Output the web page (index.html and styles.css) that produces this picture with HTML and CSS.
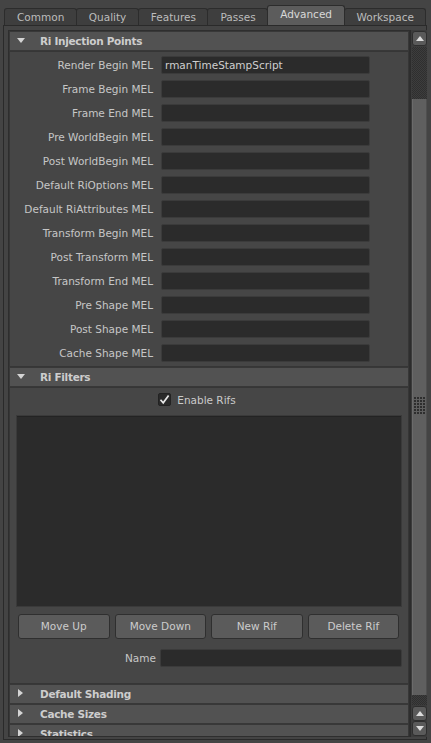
FILE: index.html
```html
<!DOCTYPE html>
<html>
<head>
<meta charset="utf-8">
<link rel="stylesheet" href="styles.css">
</head>
<body>
<div class="tabs">
  <div class="tab">Common</div>
  <div class="tab">Quality</div>
  <div class="tab">Features</div>
  <div class="tab">Passes</div>
  <div class="tab active">Advanced</div>
  <div class="tab">Workspace</div>
</div>
<div class="panel">
  <div class="view">
    <div class="content">
      <div class="sec-head"><span class="tri-down"></span>Ri Injection Points</div>
      <div class="sec-body form">
        <div class="row"><span class="lbl">Render Begin MEL</span><div class="field">rmanTimeStampScript</div></div>
        <div class="row"><span class="lbl">Frame Begin MEL</span><div class="field"></div></div>
        <div class="row"><span class="lbl">Frame End MEL</span><div class="field"></div></div>
        <div class="row"><span class="lbl">Pre WorldBegin MEL</span><div class="field"></div></div>
        <div class="row"><span class="lbl">Post WorldBegin MEL</span><div class="field"></div></div>
        <div class="row"><span class="lbl">Default RiOptions MEL</span><div class="field"></div></div>
        <div class="row"><span class="lbl">Default RiAttributes MEL</span><div class="field"></div></div>
        <div class="row"><span class="lbl">Transform Begin MEL</span><div class="field"></div></div>
        <div class="row"><span class="lbl">Post Transform MEL</span><div class="field"></div></div>
        <div class="row"><span class="lbl">Transform End MEL</span><div class="field"></div></div>
        <div class="row"><span class="lbl">Pre Shape MEL</span><div class="field"></div></div>
        <div class="row"><span class="lbl">Post Shape MEL</span><div class="field"></div></div>
        <div class="row"><span class="lbl">Cache Shape MEL</span><div class="field"></div></div>
      </div>
      <div class="sec-head"><span class="tri-down"></span>Ri Filters</div>
      <div class="sec-body filters">
        <div class="check-row">
          <span class="checkbox"><svg width="11" height="11" viewBox="0 0 11 11"><path d="M1.5 5.8 L4.2 8.8 L9.6 1.6" fill="none" stroke="#e8e8e8" stroke-width="1.7"/></svg></span>
          <span class="check-lbl">Enable Rifs</span>
        </div>
        <div class="listbox"></div>
        <div class="buttons">
          <div class="btn">Move Up</div>
          <div class="btn">Move Down</div>
          <div class="btn">New Rif</div>
          <div class="btn">Delete Rif</div>
        </div>
        <div class="name-row"><span class="name-lbl">Name</span><div class="field wide"></div></div>
      </div>
      <div class="sec-head"><span class="tri-right"></span>Default Shading</div>
      <div class="sec-head"><span class="tri-right"></span>Cache Sizes</div>
      <div class="sec-head"><span class="tri-right"></span>Statistics</div>
    </div>
    <div class="scrollbar">
      <div class="sb-btn"><span class="arr-up"></span></div>
      <div class="sb-track">
        <div class="sb-thumb"><div class="grip"></div></div>
      </div>
      <div class="sb-btn"><span class="arr-up"></span></div>
      <div class="sb-btn"><span class="arr-down"></span></div>
    </div>
  </div>
</div>
</body>
</html>
```

FILE: styles.css
```css
* { box-sizing: border-box; }
html, body { margin: 0; padding: 0; }
body {
  background: #444444;
  font-family: "DejaVu Sans", sans-serif;
  font-size: 10.5px;
  color: #c8c8c8;
  width: 431px;
  height: 743px;
  overflow: hidden;
}
.tabs {
  display: flex;
  align-items: flex-end;
  height: 25px;
  padding-left: 4px;
}
.tab {
  height: 17px;
  line-height: 16px;
  padding: 0 11.5px 0 12px;
  background: #3e3e3e;
  border: 1px solid #2c2c2c;
  border-bottom: none;
  border-radius: 3px 3px 0 0;
  color: #bcbcbc;
  margin-right: -1px;
  white-space: nowrap;
}
.tab.active {
  height: 20px;
  line-height: 17px;
  background: #5c5c5c;
  color: #d8d8d8;
  position: relative;
  z-index: 1;
}
.panel {
  margin: 0 4px 0 3px;
  border: 1px solid #2a2a2a;
  padding: 4px 0 2px 4px;
  background: #444444;
}
.view {
  display: flex;
  height: 707px;
}
.content {
  width: 402px;
  border: 1px solid #2e2e2e;
  overflow: hidden;
  display: flex;
  flex-direction: column;
  flex: none;
}
.sec-head {
  flex: none;
  height: 20px;
  line-height: 18px;
  background: #525252;
  border: 1px solid #383838;
  font-weight: bold;
  letter-spacing: -0.3px;
  color: #cdcdcd;
  padding-left: 30px;
  position: relative;
}
.tri-down {
  position: absolute;
  left: 7px;
  top: 6px;
  width: 0; height: 0;
  border-left: 4.5px solid transparent;
  border-right: 4.5px solid transparent;
  border-top: 5px solid #d4d4d4;
}
.tri-right {
  position: absolute;
  left: 8px;
  top: 4px;
  width: 0; height: 0;
  border-top: 4.5px solid transparent;
  border-bottom: 4.5px solid transparent;
  border-left: 5px solid #d4d4d4;
}
.sec-body {
  flex: none;
  background: #464646;
  border: 1px solid #363636;
}
.form {
  padding: 4px 0 4px 0;
  display: flex;
  flex-direction: column;
  gap: 6px;
}
.row {
  display: flex;
  align-items: center;
  height: 18px;
}
.lbl {
  width: 143px;
  text-align: right;
  margin-right: 8px;
  white-space: nowrap;
  color: #c6c6c6;
}
.field {
  width: 209px;
  height: 18px;
  background: #2b2b2b;
  border: 1px solid #3b3b3b;
  border-radius: 2px;
  line-height: 16px;
  padding-left: 3px;
  color: #cfcfcf;
}
.filters {
  height: 297px;
  padding: 4px 6px 0 6px;
}
.check-row {
  display: flex;
  align-items: center;
  justify-content: center;
  height: 15px;
  gap: 6px;
  padding-right: 24px;
}
.checkbox {
  width: 13px;
  height: 13px;
  background: #2a2a2a;
  border: 1px solid #222;
  border-radius: 2px;
  display: flex;
  align-items: center;
  justify-content: center;
}
.check-lbl { color: #cacaca; }
.listbox {
  margin-top: 8px;
  height: 192px;
  background: #2b2b2b;
  border: 1px solid #3a3a3a;
  box-shadow: inset 0 1px 0 #232323;
}
.buttons {
  display: flex;
  gap: 5px;
  margin: 7px 3px 0 2px;
}
.btn {
  flex: 1;
  height: 25px;
  line-height: 23px;
  text-align: center;
  background: #5b5b5b;
  border: 1px solid #2f2f2f;
  border-radius: 3px;
  color: #cccccc;
  white-space: nowrap;
}
.name-row {
  display: flex;
  align-items: center;
  margin-top: 10px;
  justify-content: flex-end;
}
.name-lbl {
  margin-right: 4px;
  color: #c6c6c6;
}
.field.wide { width: 242px; }
.scrollbar {
  width: 17px;
  border-left: 1px solid #2c2c2c;
  margin-left: 0;
  display: flex;
  flex-direction: column;
  padding-top: 1px;
  background: #3c3c3c;
}
.sb-btn {
  flex: none;
  width: 15px;
  height: 15px;
  margin-left: 1px;
  background: #5a5a5a;
  border: 1px solid #2e2e2e;
  border-radius: 3px;
  display: flex;
  align-items: center;
  justify-content: center;
}
.arr-up {
  width: 0; height: 0;
  border-left: 4.5px solid transparent;
  border-right: 4.5px solid transparent;
  border-bottom: 5px solid #dcdcdc;
}
.arr-down {
  width: 0; height: 0;
  border-left: 4.5px solid transparent;
  border-right: 4.5px solid transparent;
  border-top: 5px solid #dcdcdc;
}
.sb-track {
  flex: none;
  height: 658px;
  margin: 1px 0 1px 1px;
  width: 15px;
  background: repeating-conic-gradient(#2f2f2f 0 25%, #3d3d3d 0 50%) 0 0 / 2px 2px;
  padding-top: 52px;
  padding-bottom: 10px;
}
.sb-thumb {
  height: 100%;
  background: #5f5f5f;
  border-left: 1px solid #6b6b6b;
  border-right: 1px solid #4f4f4f;
  display: flex;
  align-items: center;
  justify-content: center;
}
.grip {
  width: 11px;
  height: 17px;
  margin-top: 16px;
  background: radial-gradient(circle at 1px 1px, #2e2e2e 1px, transparent 1.2px) 0 0 / 3px 3px;
}
```
